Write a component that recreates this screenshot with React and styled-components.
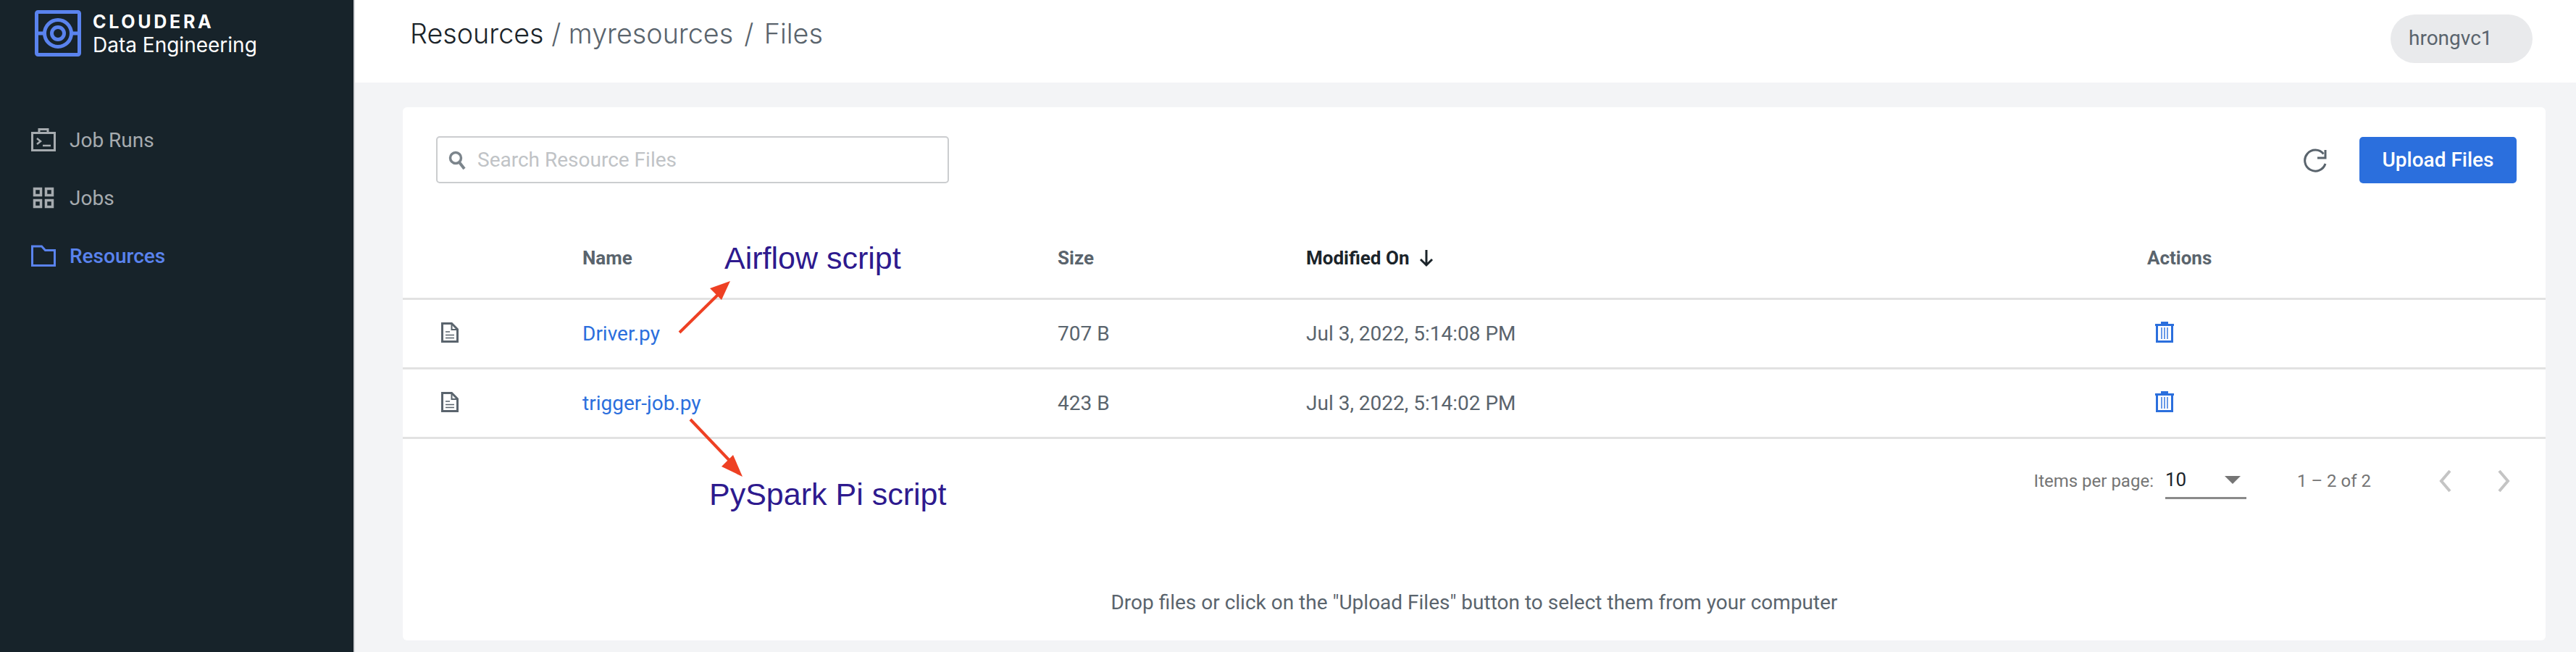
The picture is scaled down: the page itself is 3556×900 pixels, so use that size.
import React from 'react'
import styled, {createGlobalStyle} from 'styled-components'

const GlobalStyle = createGlobalStyle`
  html, body {
    margin: 0;
    padding: 0;
    background: #f3f4f6;
  }
  * {
    box-sizing: border-box;
  }
`

const Page = styled.div`
  display: flex;
  width: 3556px;
  height: 900px;
  overflow: hidden;
  font-family: Roboto, sans-serif;
`

const Sidebar = styled.aside`
  width: 490px;
  flex-shrink: 0;
  background: #17232a;
  border-right: 2px solid #d5d6d9;
`

const Brand = styled.div`
  display: flex;
  gap: 16px;
  padding: 14px 0 0 48px;
`

const BrandText = styled.div`
  display: flex;
  flex-direction: column;
  color: #ffffff;
`

const BrandName = styled.span`
  font-family: Inter, sans-serif;
  font-size: 25px;
  font-weight: 700;
  line-height: 30px;
  letter-spacing: 3.7px;
  margin-top: 1px;
`

const BrandProduct = styled.span`
  font-family: Inter, sans-serif;
  font-size: 28px;
  font-weight: 400;
  line-height: 34px;
`

const Nav = styled.nav`
  display: flex;
  flex-direction: column;
  padding-top: 74px;
`

const NavItem = styled.a`
  display: flex;
  align-items: center;
  height: 80px;
  padding-left: 43px;
  gap: 19px;
  font-size: 28px;
  font-weight: ${(props) => (props.$active ? 500 : 400)};
  color: ${(props) => (props.$active ? '#5a83ee' : '#a6abaf')};
`

const NavIcon = styled.svg`
  width: 34px;
  height: 34px;
  flex-shrink: 0;
`

const Main = styled.main`
  flex: 1;
  display: flex;
  flex-direction: column;
  min-width: 0;
`

const TopBar = styled.header`
  display: flex;
  align-items: center;
  justify-content: space-between;
  height: 114px;
  padding: 0 60px 7px 76px;
  background: #ffffff;
`

const Crumbs = styled.div`
  display: flex;
  gap: 15px;
  margin-top: -15px;
  font-family: Inter, sans-serif;
  font-size: 37.7px;
  font-weight: 300;
  color: #5a646d;
`

const CrumbRoot = styled.span`
  color: #1b242a;
`

const CrumbLast = styled.span`
  word-spacing: 4px;
`

const Pill = styled.div`
  width: 196px;
  height: 67px;
  padding-left: 25px;
  border-radius: 34px;
  background: #e9eaec;
  color: #5a646d;
  font-size: 28px;
  line-height: 66px;
`

const Content = styled.div`
  flex: 1;
  display: flex;
  padding: 34px 42px 16px 66px;
  min-height: 0;
`

const Card = styled.section`
  position: relative;
  flex: 1;
  display: flex;
  flex-direction: column;
  background: #ffffff;
  border-radius: 6px;
`

const Toolbar = styled.div`
  display: flex;
  align-items: center;
  height: 65px;
  margin-top: 40px;
  padding: 0 40px 0 46px;
`

const SearchBox = styled.div`
  display: flex;
  align-items: center;
  gap: 15px;
  width: 708px;
  height: 65px;
  padding-left: 14px;
  border: 2px solid #cbcdcf;
  border-radius: 5px;
  color: #c0c3c6;
  font-size: 28px;
`

const RefreshIcon = styled.svg`
  width: 36px;
  height: 36px;
  margin-left: auto;
  margin-right: 42px;
`

const UploadButton = styled.button`
  width: 217px;
  height: 64px;
  border: 0;
  border-radius: 5px;
  background: #2b6fdd;
  color: #ffffff;
  font-family: Roboto, sans-serif;
  font-size: 28px;
  font-weight: 500;
`

const Row = styled.div`
  display: grid;
  grid-template-columns: 248px 656px 343px 1161px 1fr;
  align-items: center;
  height: ${(props) => props.$height}px;
  border-bottom: 3px solid #e2e2e2;
  font-size: 28px;
  color: #5a646d;
`

const HeadRow = styled(Row)`
  margin-top: 48px;
  font-size: 26px;
  font-weight: 700;
`

const SortHead = styled.span`
  display: flex;
  align-items: center;
  gap: 14px;
  color: #1b242a;
`

const FileCell = styled.span`
  display: flex;
  padding-left: 53px;
  margin-top: -4px;
`

const FileLink = styled.a`
  color: #2b6fdd;
`

const TrashIcon = styled.svg`
  display: block;
  width: 28px;
  height: 30px;
  margin: -6px 0 0 10px;
`

const Pagination = styled.div`
  display: flex;
  align-items: center;
  justify-content: flex-end;
  height: 115px;
  padding-right: 46px;
  color: #757575;
  font-size: 24px;
`

const PageSize = styled.div`
  display: flex;
  align-items: center;
  justify-content: space-between;
  width: 112px;
  height: 50px;
  margin: 0 70px 0 16px;
  padding-right: 8px;
  border-bottom: 3px solid #8a8a8a;
  color: #1b242a;
  font-size: 26px;
`

const Caret = styled.i`
  width: 0;
  height: 0;
  border-left: 11px solid transparent;
  border-right: 11px solid transparent;
  border-top: 11px solid #757575;
`

const PagerIcon = styled.svg`
  width: 24px;
  height: 34px;
  margin-left: ${(props) => props.$gap}px;
`

const DropHint = styled.div`
  margin-top: auto;
  padding-bottom: 36px;
  text-align: center;
  color: #5a646d;
  font-size: 28px;
`

const Note = styled.span`
  position: absolute;
  left: ${(props) => props.$x}px;
  top: ${(props) => props.$y}px;
  font-family: 'Liberation Sans', Arial, sans-serif;
  font-size: 43px;
  line-height: 48px;
  color: #2e1a8e;
  white-space: nowrap;
`

const ArrowLayer = styled.svg`
  position: absolute;
  left: 0;
  top: 0;
  width: 100%;
  height: 100%;
  pointer-events: none;
`

const FileIcon = () => (
  <svg width='24' height='28' viewBox='0 0 24 28' fill='none' stroke='#5a646d'>
    <path d='M1.500 1.500h13l8 8v17h-21z' strokeWidth='3' />
    <path d='M14.500 2v8h7' strokeWidth='2' />
    <path d='M6 13h6M6 17.500h12M6 21.500h12' strokeWidth='1.500' />
  </svg>
)

const Trash = () => (
  <TrashIcon viewBox='0 0 28 30' fill='none'>
    <path d='M9 1h10v3h8v3H1V4h8z' fill='#2b6fdd' />
    <path d='M3.500 6v22.500h21V6' stroke='#2b6fdd' strokeWidth='3' />
    <path d='M10 9v16M14 9v16M18 9v16' stroke='#2b6fdd' strokeWidth='1.400' />
  </TrashIcon>
)

const files = [
  {name: 'Driver.py', size: '707 B', modified: 'Jul 3, 2022, 5:14:08 PM'},
  {name: 'trigger-job.py', size: '423 B', modified: 'Jul 3, 2022, 5:14:02 PM'},
]

export default function App() {
  return (
    <Page>
      <GlobalStyle />
      <Sidebar>
        <Brand>
          <svg width='64' height='64' viewBox='0 0 64 64' fill='none'>
            <rect x='2.500' y='2.500' width='59' height='59' rx='2' stroke='#5a83ee' strokeWidth='5' />
            <circle cx='32' cy='32' r='18.500' stroke='#5a83ee' strokeWidth='5' />
            <circle cx='32' cy='32' r='8.500' stroke='#5a83ee' strokeWidth='5' />
            <path d='M3 32h11M50 32h11' stroke='#5a83ee' strokeWidth='5' />
          </svg>
          <BrandText>
            <BrandName>CLOUDERA</BrandName>
            <BrandProduct>Data Engineering</BrandProduct>
          </BrandText>
        </Brand>
        <Nav>
          <NavItem>
            <NavIcon viewBox='0 0 34 34' fill='none' stroke='#a6abaf' strokeWidth='3'>
              <path d='M1.500 7.500h31v24h-31zM11 7V2.500h12V7' />
              <path d='M8 15l5 4-5 4M16 25h11' strokeWidth='2.500' />
            </NavIcon>
            Job Runs
          </NavItem>
          <NavItem>
            <NavIcon viewBox='0 0 34 34' fill='none' stroke='#a6abaf' strokeWidth='3.500'>
              <path d='M4.500 4.500h9v9h-9zM20.500 4.500h9v9h-9zM4.500 20.500h9v9h-9zM20.500 20.500h9v9h-9z' />
            </NavIcon>
            Jobs
          </NavItem>
          <NavItem $active>
            <NavIcon viewBox='0 0 34 34' fill='none' stroke='#5a83ee' strokeWidth='3'>
              <path d='M1.500 4h13l5 5.500h13v21h-31z' />
            </NavIcon>
            Resources
          </NavItem>
        </Nav>
      </Sidebar>
      <Main>
        <TopBar>
          <Crumbs>
            <span><CrumbRoot>Resources</CrumbRoot> / myresources</span>
            <CrumbLast>/ Files</CrumbLast>
          </Crumbs>
          <Pill>hrongvc1</Pill>
        </TopBar>
        <Content>
          <Card>
            <Toolbar>
              <SearchBox>
                <svg width='26' height='28' viewBox='0 0 26 28' fill='none' stroke='#7c858c'>
                  <circle cx='11' cy='11' r='7.500' strokeWidth='3.500' />
                  <path d='M16 17l7 9' strokeWidth='4' />
                </svg>
                Search Resource Files
              </SearchBox>
              <RefreshIcon viewBox='0 0 36 36' fill='none' stroke='#5a646d' strokeWidth='3'>
                <path d='M31 23a14.500 14.500 0 1 1-2.500-13.500' />
                <path d='M31 4v11H20' />
              </RefreshIcon>
              <UploadButton>Upload Files</UploadButton>
            </Toolbar>
            <HeadRow $height={113}>
              <span />
              <span>Name</span>
              <span>Size</span>
              <SortHead>
                Modified On
                <svg width='20' height='26' viewBox='0 0 20 26' fill='none' stroke='#1b242a' strokeWidth='3'>
                  <path d='M10 2v21M2 15l8 8 8-8' />
                </svg>
              </SortHead>
              <span>Actions</span>
            </HeadRow>
            {files.map((file) => (
              <Row $height={96} key={file.name}>
                <FileCell><FileIcon /></FileCell>
                <FileLink>{file.name}</FileLink>
                <span>{file.size}</span>
                <span>{file.modified}</span>
                <Trash />
              </Row>
            ))}
            <Pagination>
              Items per page:
              <PageSize>10<Caret /></PageSize>
              1 – 2 of 2
              <PagerIcon $gap={91} viewBox='0 0 24 34' fill='none' stroke='#c4c4c4' strokeWidth='4'>
                <path d='M18 3L6 17l12 14' />
              </PagerIcon>
              <PagerIcon $gap={56} viewBox='0 0 24 34' fill='none' stroke='#c4c4c4' strokeWidth='4'>
                <path d='M6 3l12 14L6 31' />
              </PagerIcon>
            </Pagination>
            <DropHint>Drop files or click on the "Upload Files" button to select them from your computer</DropHint>
            <Note $x={444} $y={184}>Airflow script</Note>
            <Note $x={423} $y={510}>PySpark Pi script</Note>
            <ArrowLayer>
              <path d='M382 311L442 252' stroke='#ee4023' strokeWidth='4' />
              <path d='M452 240L424 250L440 266z' fill='#ee4023' />
              <path d='M397 431L458 495' stroke='#ee4023' strokeWidth='4' />
              <path d='M469 510L440 496L456 480z' fill='#ee4023' />
            </ArrowLayer>
          </Card>
        </Content>
      </Main>
    </Page>
  )
}
